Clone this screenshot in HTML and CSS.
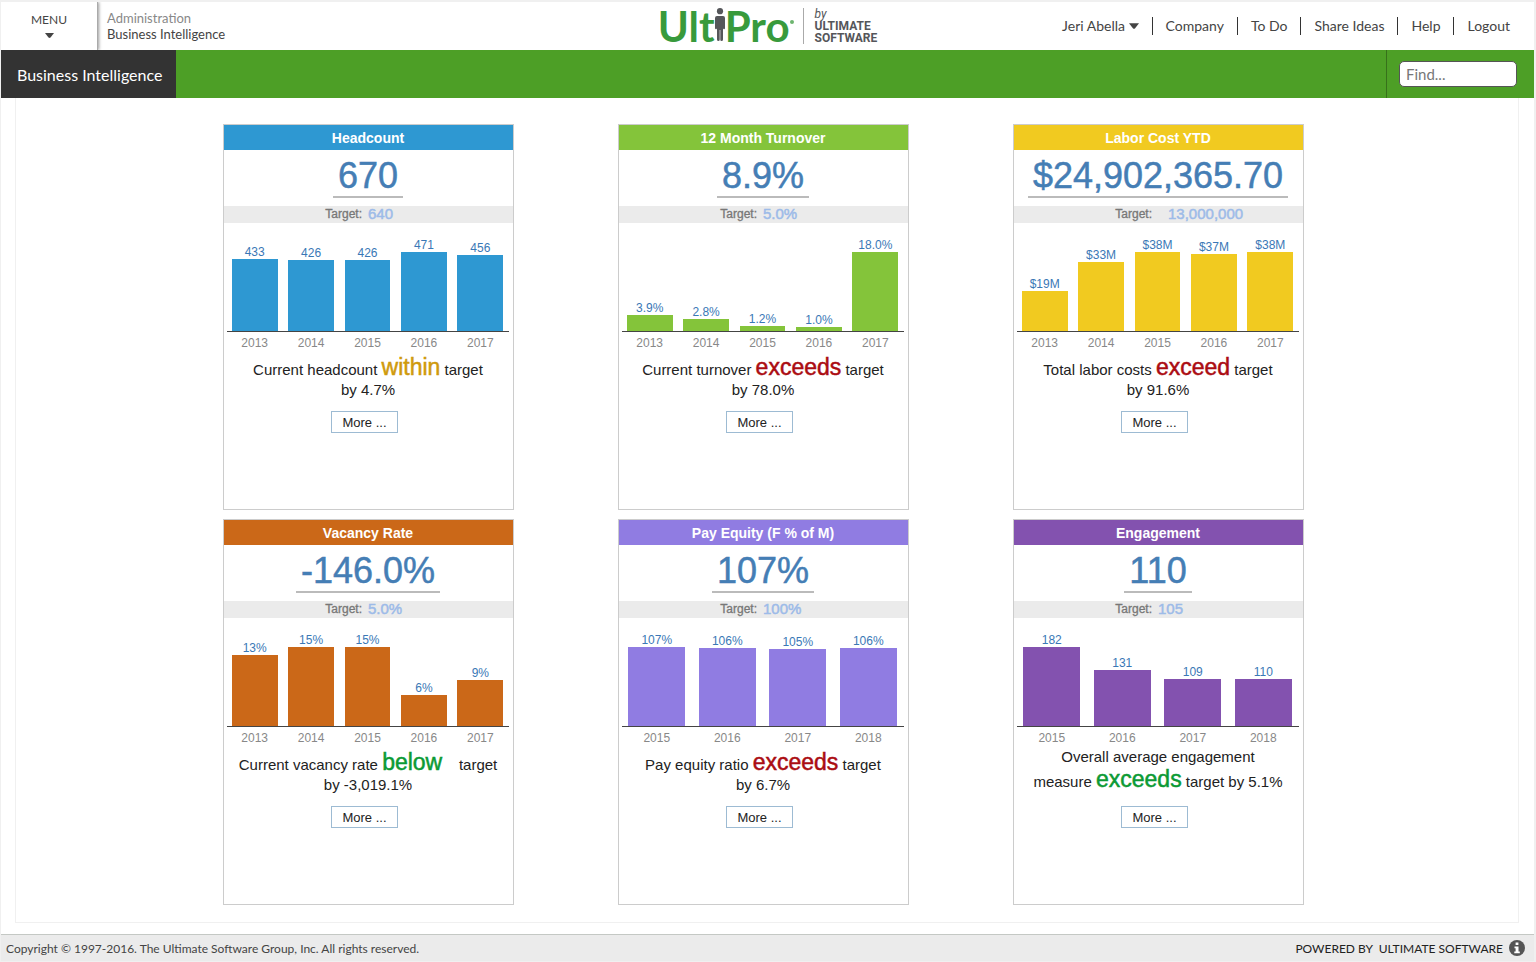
FILE: index.html
```html
<!DOCTYPE html>
<html lang="en">
<head>
<meta charset="utf-8">
<title>Business Intelligence</title>
<link rel="stylesheet" href="styles.css">
</head>
<body>
<div class="shell">
  <header class="top">
    <button class="menu" type="button">MENU<svg class="caret" viewBox="0 0 9 5" aria-hidden="true"><path d="M0 0h9L5.5 4.5Q4.500 5.400 3.500 4.500Z"/></svg></button>
    <div class="crumbs"><span class="crumb-parent">Administration</span><span>Business Intelligence</span></div>
    <div class="brand">
      <div class="wordmark"><span>Ult</span><svg class="person" viewBox="0 0 10 33" aria-hidden="true"><circle cx="5" cy="3.200" r="3.100"/><path d="M2 8h6q2 0 2 2v10q0 1.200-1 1.200t-1-1.200v11.500q0 1.500-1.400 1.500T5.300 31.500V22h-.6v9.500q0 1.500-1.300 1.500T2 31.500V20q0 1.200-1 1.200T0 20V10q0-2 2-2z"/></svg><span>Pro</span><span class="reg"></span></div>
      <div class="byline"><em>by</em><strong>ULTIMATE</strong><strong>SOFTWARE</strong></div>
    </div>
    <nav class="links">
      <a href="#">Jeri Abella <svg class="caret" viewBox="0 0 9 5" aria-hidden="true"><path d="M0 0h9L5.500 4.500Q4.500 5.400 3.500 4.500Z"/></svg></a>
      <a href="#">Company</a>
      <a href="#">To Do</a>
      <a href="#">Share Ideas</a>
      <a href="#">Help</a>
      <a href="#">Logout</a>
    </nav>
  </header>
  <div class="bar">
    <a class="tab" href="#">Business Intelligence</a>
    <form class="search"><input type="text" placeholder="Find..." aria-label="Find"></form>
  </div>
  <main class="panel">
    <div class="cards">
      <section class="card blue">
        <h2>Headcount</h2>
        <div class="figure"><span>670</span></div>
        <div class="target"><span>Target:</span><b>640</b></div>
        <div class="chart">
          <div class="col"><span>433</span><i style="height:72px"></i></div>
          <div class="col"><span>426</span><i style="height:71px"></i></div>
          <div class="col"><span>426</span><i style="height:71px"></i></div>
          <div class="col"><span>471</span><i style="height:79px"></i></div>
          <div class="col"><span>456</span><i style="height:76px"></i></div>
        </div>
        <div class="years"><span>2013</span><span>2014</span><span>2015</span><span>2016</span><span>2017</span></div>
        <p class="message">Current headcount <em class="warn">within</em> target<br>by 4.7%</p>
        <div class="actions"><button type="button">More ...</button></div>
      </section>
      <section class="card green">
        <h2>12 Month Turnover</h2>
        <div class="figure"><span>8.9%</span></div>
        <div class="target"><span>Target:</span><b>5.0%</b></div>
        <div class="chart">
          <div class="col"><span>3.9%</span><i style="height:16px"></i></div>
          <div class="col"><span>2.8%</span><i style="height:12px"></i></div>
          <div class="col"><span>1.2%</span><i style="height:5px"></i></div>
          <div class="col"><span>1.0%</span><i style="height:4px"></i></div>
          <div class="col"><span>18.0%</span><i style="height:79px"></i></div>
        </div>
        <div class="years"><span>2013</span><span>2014</span><span>2015</span><span>2016</span><span>2017</span></div>
        <p class="message">Current turnover <em class="bad">exceeds</em> target<br>by 78.0%</p>
        <div class="actions"><button type="button">More ...</button></div>
      </section>
      <section class="card yellow">
        <h2>Labor Cost YTD</h2>
        <div class="figure"><span>$24,902,365.70</span></div>
        <div class="target wide"><span>Target:</span><b>13,000,000</b></div>
        <div class="chart">
          <div class="col"><span>$19M</span><i style="height:40px"></i></div>
          <div class="col"><span>$33M</span><i style="height:69px"></i></div>
          <div class="col"><span>$38M</span><i style="height:79px"></i></div>
          <div class="col"><span>$37M</span><i style="height:77px"></i></div>
          <div class="col"><span>$38M</span><i style="height:79px"></i></div>
        </div>
        <div class="years"><span>2013</span><span>2014</span><span>2015</span><span>2016</span><span>2017</span></div>
        <p class="message">Total labor costs <em class="bad">exceed</em> target<br>by 91.6%</p>
        <div class="actions"><button type="button">More ...</button></div>
      </section>
      <section class="card orange">
        <h2>Vacancy Rate</h2>
        <div class="figure"><span>-146.0%</span></div>
        <div class="target"><span>Target:</span><b>5.0%</b></div>
        <div class="chart">
          <div class="col"><span>13%</span><i style="height:71px"></i></div>
          <div class="col"><span>15%</span><i style="height:79px"></i></div>
          <div class="col"><span>15%</span><i style="height:79px"></i></div>
          <div class="col"><span>6%</span><i style="height:31px"></i></div>
          <div class="col"><span>9%</span><i style="height:46px"></i></div>
        </div>
        <div class="years"><span>2013</span><span>2014</span><span>2015</span><span>2016</span><span>2017</span></div>
        <p class="message">Current vacancy rate <em class="good">below</em> &nbsp;&nbsp; target<br>by -3,019.1%</p>
        <div class="actions"><button type="button">More ...</button></div>
      </section>
      <section class="card violet">
        <h2>Pay Equity (F % of M)</h2>
        <div class="figure"><span>107%</span></div>
        <div class="target"><span>Target:</span><b>100%</b></div>
        <div class="chart">
          <div class="col"><span>107%</span><i style="height:79px"></i></div>
          <div class="col"><span>106%</span><i style="height:78px"></i></div>
          <div class="col"><span>105%</span><i style="height:77px"></i></div>
          <div class="col"><span>106%</span><i style="height:78px"></i></div>
        </div>
        <div class="years"><span>2015</span><span>2016</span><span>2017</span><span>2018</span></div>
        <p class="message">Pay equity ratio <em class="bad">exceeds</em> target<br>by 6.7%</p>
        <div class="actions"><button type="button">More ...</button></div>
      </section>
      <section class="card purple">
        <h2>Engagement</h2>
        <div class="figure"><span>110</span></div>
        <div class="target"><span>Target:</span><b>105</b></div>
        <div class="chart">
          <div class="col"><span>182</span><i style="height:79px"></i></div>
          <div class="col"><span>131</span><i style="height:56px"></i></div>
          <div class="col"><span>109</span><i style="height:47px"></i></div>
          <div class="col"><span>110</span><i style="height:47px"></i></div>
        </div>
        <div class="years"><span>2015</span><span>2016</span><span>2017</span><span>2018</span></div>
        <p class="message tall">Overall average engagement<br>measure <em class="good">exceeds</em> target by 5.1%</p>
        <div class="actions"><button type="button">More ...</button></div>
      </section>
    </div>
  </main>
  <footer class="foot">
    <span>Copyright © 1997-2016. The Ultimate Software Group, Inc. All rights reserved.</span>
    <span class="powered">POWERED BY&nbsp; ULTIMATE SOFTWARE
      <svg viewBox="0 0 16 16" aria-hidden="true"><circle cx="8" cy="8" r="8" fill="#555"/><path fill="#fff" d="M6.600 2.500h2.800v2.500H6.600zM5.500 6.500h4v5h1.300v1.800H5.300v-1.800h1.300V8.300H5.500z"/></svg>
    </span>
  </footer>
</div>
</body>
</html>
```
FILE: styles.css
```css
* { box-sizing: border-box; }

body {
  margin: 0;
  padding: 2px 2px 2px 1px;
  min-height: 100vh;
  display: flex;
  background: #f0f0f0;
  color: #444;
  font-family: Lato, "Open Sans", sans-serif;
  font-size: 14px;
}

a { color: inherit; text-decoration: none; }
button, input { font: inherit; }

.shell {
  flex: 1;
  display: flex;
  flex-direction: column;
  background: #fff;
}

/* Top row */
.top {
  display: grid;
  grid-template-columns: 1fr auto 1fr;
  grid-template-rows: 48px;
  align-items: center;
}
.menu {
  grid-area: 1 / 1;
  width: 97px;
  height: 48px;
  padding: 0 0 3px;
  border: 0;
  border-right: 1px solid #aaa;
  background: #fff;
  box-shadow: 1px 0 3px rgba(0, 0, 0, .4);
  clip-path: inset(0 -6px 0 0);
  color: #444;
  font-size: 12px;
  line-height: 16px;
  display: flex;
  flex-direction: column;
  align-items: center;
  justify-content: center;
  gap: 5px;
}
.caret { width: 9px; height: 5px; fill: #444; }
.crumbs {
  grid-area: 1 / 1;
  margin-left: 106px;
  display: flex;
  flex-direction: column;
  font-size: 13px;
  line-height: 16px;
}
.crumb-parent { color: #888; }

.brand { grid-area: 1 / 2; display: flex; align-items: center; gap: 9px; }
.wordmark {
  display: flex;
  align-items: flex-end;
  color: #389a3c;
  font-size: 42px;
  font-weight: 700;
  line-height: 44px;
}
.person { width: 10px; height: 33px; margin: 0 0 7px; fill: #55565a; }
.reg { align-self: flex-start; width: 4px; height: 4px; margin: 16px 0 0; border-radius: 50%; background: #6db56f; }
.byline {
  display: flex;
  flex-direction: column;
  padding-left: 11px;
  border-left: 1px solid #aaa;
  color: #55565a;
  font-family: Roboto, sans-serif;
  font-size: 12px;
  line-height: 12px;
}

.links {
  grid-area: 1 / 3;
  justify-self: end;
  display: flex;
  padding-right: 11px;
}
.links a { padding: 0 13px 0 12px; line-height: 18px; white-space: nowrap; }
.links a + a { padding-left: 13px; border-left: 1px solid #333; }
.links .caret { width: 10px; height: 6px; margin-bottom: 2px; }

/* Green section bar */
.bar {
  height: 48px;
  display: flex;
  justify-content: space-between;
  background: #4d9f26;
}
.tab {
  display: flex;
  align-items: center;
  padding: 0 14px 0 16px;
  background: #333;
  color: #fff;
  font-size: 16px;
}
.search {
  display: flex;
  align-items: center;
  padding: 0 17px 0 12px;
  border-left: 1px solid #37711b;
}
.search input {
  width: 118px;
  height: 26px;
  padding: 0 6px;
  border: 1px solid #555;
  border-radius: 5px;
  background: #fff;
  font-size: 15px;
}
.search input::placeholder { color: #777; }

/* Dashboard */
.panel {
  flex: 1;
  margin: 0 15px 11px 14px;
  padding: 26px 8px 17px 0;
  border: 1px solid #f0f0f0;
  border-top: 0;
}
.cards {
  display: grid;
  grid-template-columns: repeat(3, 291px);
  justify-content: center;
  gap: 9px 104px;
}
.card {
  min-height: 386px;
  border: 1px solid #ccc;
  color: #222;
  font-family: "Liberation Sans", Arial, sans-serif;
}
.blue { --hue: #2e98d2; }
.green { --hue: #84c43a; }
.yellow { --hue: #f1ca20; }
.orange { --hue: #cb6818; }
.violet { --hue: #907ce2; }
.purple { --hue: #8352af; }

.card h2 {
  height: 25px;
  margin: 0;
  background: var(--hue);
  color: #fff;
  font-size: 14px;
  line-height: 27px;
  text-align: center;
}
.figure { height: 56px; text-align: center; }
.figure span {
  display: inline-block;
  height: 48px;
  padding: 0 5px;
  border-bottom: 2px solid #bbb;
  color: #457eb5;
  font-size: 36px;
  line-height: 52px;
  -webkit-text-stroke: 0.5px #457eb5;
}
.target {
  display: grid;
  grid-template-columns: 1fr 1fr;
  height: 17px;
  background: #ebebeb;
  color: #777;
  font-size: 12px;
  line-height: 17px;
  -webkit-text-stroke: 0.3px #777;
}
.target span { padding-right: 6px; text-align: right; }
.target b {
  color: #9dbbe8;
  font-size: 15px;
  font-weight: 400;
  line-height: 16px;
  -webkit-text-stroke: 0.5px #9dbbe8;
}
.target.wide b { padding-left: 10px; }

.chart {
  display: flex;
  height: 109px;
  margin: 0 4px 0 3px;
  border-bottom: 1px solid #444;
}
.col {
  flex: 1;
  display: flex;
  flex-direction: column;
  align-items: center;
  justify-content: flex-end;
  color: #3a78b6;
  font-size: 12px;
  line-height: 14px;
}
.col i { width: 81%; background: var(--hue); }
.years {
  display: flex;
  margin: 4px 4px 0 3px;
  color: #888;
  font-size: 12px;
  line-height: 14px;
}
.years span { flex: 1; text-align: center; }

.message {
  height: 61px;
  margin: 0;
  padding-top: 7px;
  font-size: 15px;
  line-height: 20px;
  text-align: center;
}
.message.tall { padding-top: 0; line-height: 23px; }
.message em {
  font-size: 23px;
  font-style: normal;
  -webkit-text-stroke: 0.5px currentColor;
}
.warn { color: #cf9a0c; }
.bad { color: #ab0c12; }
.good { color: #0b9a34; }

.actions { padding-right: 7px; text-align: center; }
.actions button {
  width: 67px;
  height: 22px;
  padding: 0;
  border: 1px solid #9dbbd3;
  background: #fff;
  color: #222;
  font-size: 13px;
}

/* Footer */
.foot {
  display: flex;
  justify-content: space-between;
  align-items: center;
  height: 27px;
  padding: 0 9px 0 5px;
  border-top: 1px solid #c4c8c4;
  background: #ebebeb;
  font-size: 12px;
}
.powered { display: flex; align-items: center; gap: 6px; color: #222; }
.powered svg { width: 16px; height: 16px; }
```
